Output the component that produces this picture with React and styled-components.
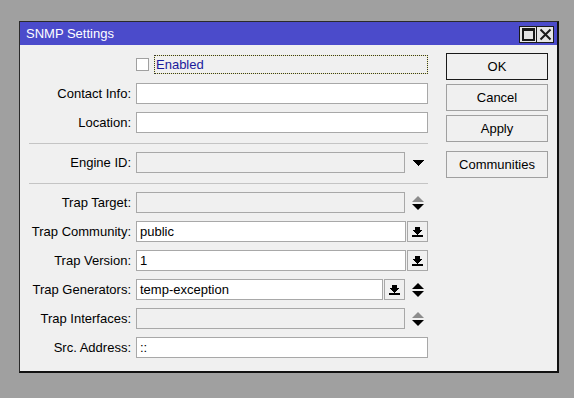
import React from "react";
import styled, { createGlobalStyle } from "styled-components";

const Global = createGlobalStyle`
  html, body { margin: 0; padding: 0; }
  body {
    background: #a0a0a0;
    font-family: "Liberation Sans", Arial, sans-serif;
    font-size: 13px;
    color: #000;
  }
`;

const Page = styled.div`
  width: 574px;
  height: 398px;
  padding: 21px 0 0 19px;
  box-sizing: border-box;
`;

const Window = styled.div`
  width: 540px;
  height: 352px;
  box-sizing: border-box;
  border-top: 1px solid #2a2a2a;
  border-left: 1px solid #2a2a2a;
  border-right: 2px solid #111;
  border-bottom: 2px solid #111;
  background: #f0f0f0;
  display: flex;
  flex-direction: column;
`;

const TitleBar = styled.div`
  height: 23px;
  background: #4b4bcb;
  display: flex;
  align-items: center;
  padding: 0 3px 0 6px;
  color: #fff;
`;

const Title = styled.div`
  flex: 1;
  font-size: 13px;
  line-height: 23px;
`;

const TitleButtons = styled.div`
  display: flex;
  margin-top: 1px;
`;

const TitleButton = styled.div`
  width: 18px;
  height: 17px;
  box-sizing: border-box;
  border: 1px solid #1a1a1a;
  margin-left: ${(p) => (p.$first ? "0" : "-1px")};
  background: #e6e6e6;
  display: flex;
  align-items: center;
  justify-content: center;
`;

const Body = styled.div`
  flex: 1;
  display: flex;
  align-items: flex-start;
  padding: 8px 9px 0 0;
  gap: 18px;
`;

const Form = styled.div`
  display: grid;
  grid-template-columns: 111px 292px;
  column-gap: 5px;
  row-gap: 8px;
  padding-top: 1px;
  align-items: center;
`;

const Label = styled.div`
  text-align: right;
  white-space: nowrap;
  line-height: 21px;
`;

const Field = styled.div`
  display: flex;
  align-items: center;
  height: 21px;
  gap: 1px;
`;

const Input = styled.div`
  flex: 1;
  height: 21px;
  box-sizing: border-box;
  border: 1px solid #a8a8a8;
  background: ${(p) => (p.$disabled ? "#f0f0f0" : "#fff")};
  padding: 0 3px;
  line-height: 19px;
  white-space: nowrap;
  overflow: hidden;
`;

const DropButton = styled.div`
  width: 21px;
  height: 21px;
  box-sizing: border-box;
  border: 1px solid #a8a8a8;
  background: #f0f0f0;
  display: flex;
  align-items: center;
  justify-content: center;
  flex: none;
`;

const ArrowArea = styled.div`
  width: 22px;
  height: 21px;
  flex: none;
  display: flex;
  align-items: center;
  justify-content: center;
  padding-left: ${(p) => p.$pad || 0}px;
  box-sizing: border-box;
`;

const Separator = styled.div`
  grid-column: 1 / -1;
  height: 1px;
  background: #c4c4c4;
  margin: 2px 0 0 9px;
`;

const CheckRow = styled.div`
  display: flex;
  align-items: center;
  height: 21px;
  gap: 5px;
`;

const CheckBox = styled.div`
  width: 13px;
  height: 13px;
  box-sizing: border-box;
  border: 1px solid #a0a0a0;
  background: #fff;
  flex: none;
`;

const FocusLabel = styled.div`
  flex: 1;
  height: 19px;
  box-sizing: border-box;
  border: 1px dotted #333;
  background: linear-gradient(#f0f0f0, #f0f0f0) padding-box,
    #f2f2a8 border-box;
  color: #1a1a9c;
  line-height: 17px;
  padding-left: 1px;
`;

const ButtonColumn = styled.div`
  display: flex;
  flex-direction: column;
  gap: 4px;
  width: 102px;
`;

const Button = styled.div`
  height: 27px;
  box-sizing: border-box;
  border: 1px solid ${(p) => (p.$default ? "#1a1a1a" : "#a0a0a0")};
  background: #f0f0f0;
  display: flex;
  align-items: center;
  justify-content: center;
  margin-top: ${(p) => p.$gapTop || 0}px;
`;

const DownTriangle = () => (
  <svg width="12" height="6" viewBox="0 0 12 6" shapeRendering="crispEdges">
    <polygon points="0,0 12,0 6,6" fill="#000" />
  </svg>
);

const UpDown = ({ upColor }) => (
  <svg width="12" height="14" viewBox="0 0 12 14">
    <polygon points="6,0 12,6 0,6" fill={upColor} />
    <polygon points="0,8 12,8 6,14" fill="#000" />
  </svg>
);

const DropIcon = () => (
  <svg width="11" height="10" viewBox="0 0 11 10" shapeRendering="crispEdges">
    <rect x="3" y="0" width="5" height="3" fill="#000" />
    <polygon points="0,3 11,3 5.5,8" fill="#000" />
    <rect x="0" y="8" width="11" height="2" fill="#000" />
  </svg>
);

const MaxIcon = () => (
  <svg width="13" height="13" viewBox="0 0 13 13" shapeRendering="crispEdges">
    <rect x="1" y="1" width="11" height="11" fill="none" stroke="#1a1a1a" strokeWidth="1.5" />
    <rect x="1" y="1" width="11" height="2" fill="#1a1a1a" />
  </svg>
);

const CloseIcon = () => (
  <svg width="13" height="13" viewBox="0 0 13 13">
    <path d="M1.5 1.5 L11.5 11.5 M11.5 1.5 L1.5 11.5" stroke="#1a1a1a" strokeWidth="2" />
  </svg>
);

export default function App() {
  return (
    <Page>
      <Global />
      <Window>
        <TitleBar>
          <Title>SNMP Settings</Title>
          <TitleButtons>
            <TitleButton $first>
              <MaxIcon />
            </TitleButton>
            <TitleButton>
              <CloseIcon />
            </TitleButton>
          </TitleButtons>
        </TitleBar>
        <Body>
          <Form>
            <div />
            <CheckRow>
              <CheckBox />
              <FocusLabel>Enabled</FocusLabel>
            </CheckRow>

            <Label>Contact Info:</Label>
            <Field>
              <Input />
            </Field>

            <Label>Location:</Label>
            <Field>
              <Input />
            </Field>

            <Separator />

            <Label>Engine ID:</Label>
            <Field>
              <Input $disabled />
              <ArrowArea $pad={2}>
                <DownTriangle />
              </ArrowArea>
            </Field>

            <Separator />

            <Label>Trap Target:</Label>
            <Field>
              <Input $disabled />
              <ArrowArea $pad={2}>
                <UpDown upColor="#8c8c8c" />
              </ArrowArea>
            </Field>

            <Label>Trap Community:</Label>
            <Field>
              <Input>public</Input>
              <DropButton>
                <DropIcon />
              </DropButton>
            </Field>

            <Label>Trap Version:</Label>
            <Field>
              <Input>1</Input>
              <DropButton>
                <DropIcon />
              </DropButton>
            </Field>

            <Label>Trap Generators:</Label>
            <Field>
              <Input>temp-exception</Input>
              <DropButton>
                <DropIcon />
              </DropButton>
              <ArrowArea $pad={1}>
                <UpDown upColor="#000" />
              </ArrowArea>
            </Field>

            <Label>Trap Interfaces:</Label>
            <Field>
              <Input $disabled />
              <ArrowArea $pad={2}>
                <UpDown upColor="#8c8c8c" />
              </ArrowArea>
            </Field>

            <Label>Src. Address:</Label>
            <Field>
              <Input>::</Input>
            </Field>
          </Form>
          <ButtonColumn>
            <Button $default>OK</Button>
            <Button>Cancel</Button>
            <Button>Apply</Button>
            <Button $gapTop={5}>Communities</Button>
          </ButtonColumn>
        </Body>
      </Window>
    </Page>
  );
}
